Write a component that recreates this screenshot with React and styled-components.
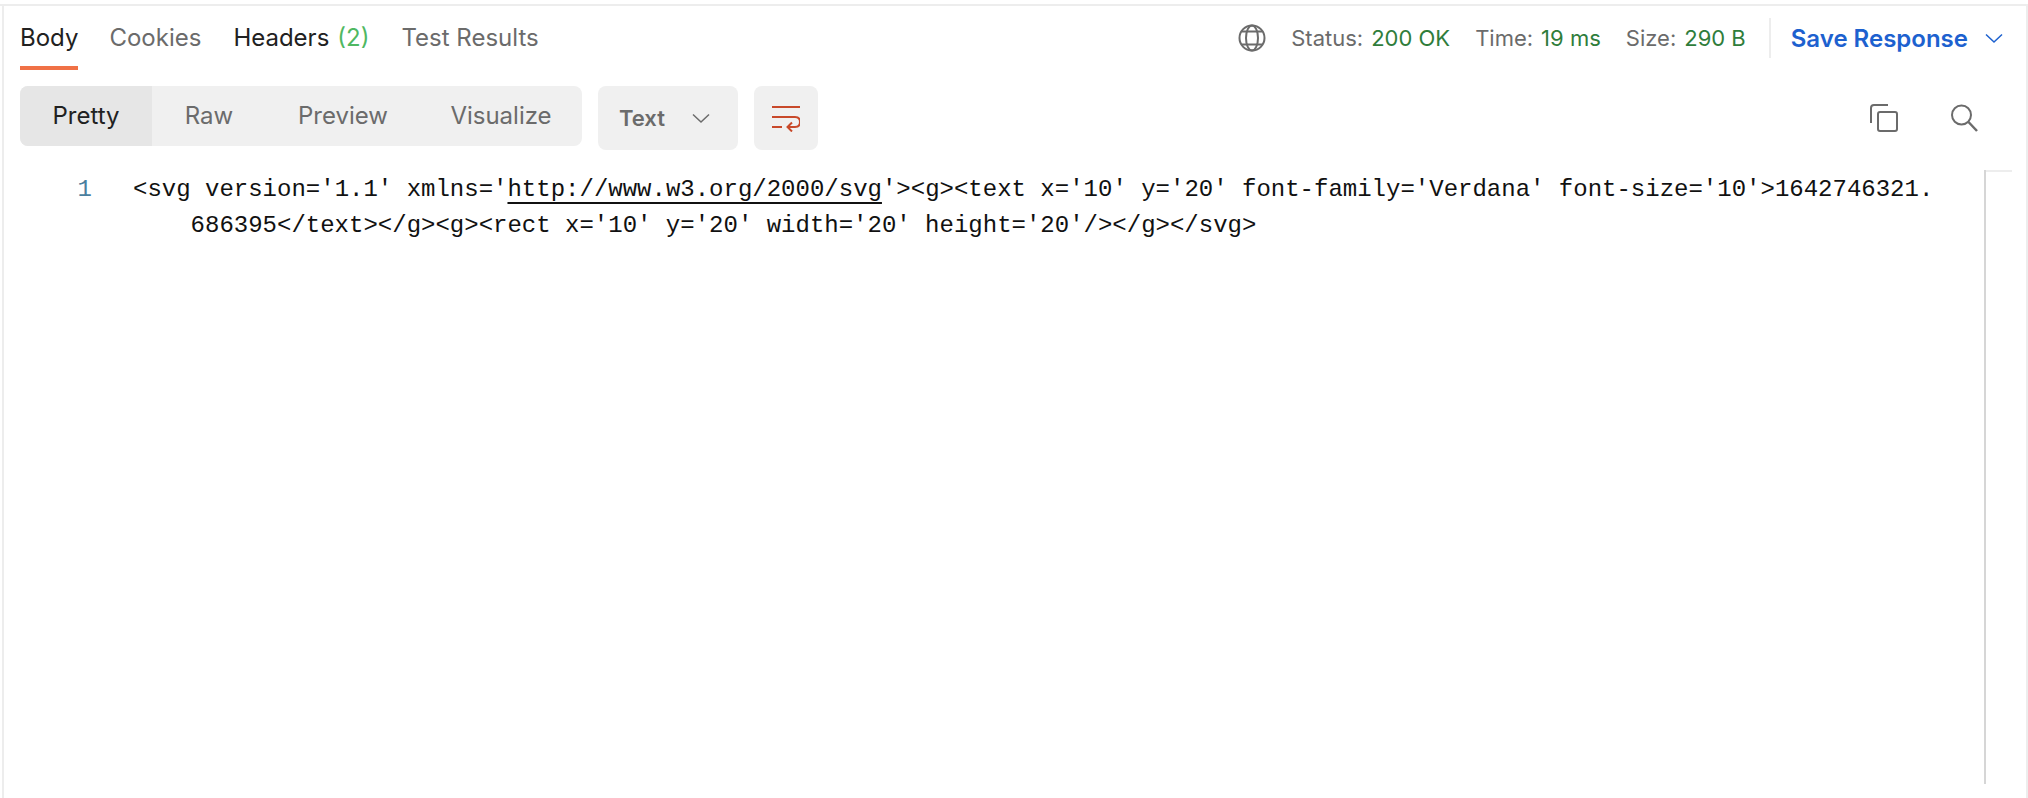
import React from "react";
import styled, { createGlobalStyle } from "styled-components";

const GlobalStyle = createGlobalStyle`
  html, body {
    margin: 0;
    padding: 0;
    background: #fff;
  }
  body {
    font-family: Inter, "Liberation Sans", sans-serif;
  }
`;

const Page = styled.div`
  width: 2028px;
  height: 798px;
  padding-top: 4px;
  box-sizing: border-box;
  overflow: hidden;
`;

const Panel = styled.div`
  height: 794px;
  box-sizing: border-box;
  padding-left: 2px;
  border-top: 2px solid #ededed;
  display: flex;
  flex-direction: column;
`;

const Inner = styled.div`
  flex: 1;
  display: flex;
  flex-direction: column;
  border-left: 2px solid #ededed;
  border-right: 2px solid #ededed;
  min-height: 0;
`;

const TopBar = styled.div`
  height: 64px;
  display: flex;
  justify-content: space-between;
  padding: 0 22px 0 16px;
`;

const Tabs = styled.div`
  display: flex;
  gap: 32px;
`;

const Tab = styled.div`
  height: 64px;
  box-sizing: border-box;
  padding-top: 17px;
  font-size: 24px;
  line-height: 30px;
  color: ${(p) => (p.$strong ? "#212121" : "#6b6b6b")};
  border-bottom: 4px solid ${(p) => (p.$active ? "#f07146" : "transparent")};

  &:first-child {
    margin-right: -1px;
  }
`;

const Count = styled.span`
  color: #4fb862;
  margin-left: 8px;
`;

const Meta = styled.div`
  display: flex;
  align-items: center;
  height: 64px;
`;

const Globe = styled.svg`
  width: 28px;
  height: 28px;
  margin-right: 25px;
`;

const Stat = styled.div`
  font-size: 22px;
  color: #6b6b6b;
  margin-right: 25px;
  white-space: nowrap;
`;

const StatValue = styled.span`
  color: #2f7d3b;
  margin-left: 8px;
`;

const Divider = styled.div`
  width: 2px;
  height: 40px;
  background: #ededed;
  margin: 0 20px 0 -2px;
`;

const SaveButton = styled.div`
  display: flex;
  align-items: center;
  gap: 16px;
  font-size: 24px;
  font-weight: 600;
  color: #1d61cf;
  white-space: nowrap;
`;

const Toolbar = styled.div`
  display: flex;
  align-items: flex-start;
  height: 64px;
  margin-top: 16px;
  padding: 0 47px 0 16px;
`;

const Segments = styled.div`
  display: flex;
  width: 562px;
  height: 60px;
  background: #f0f0f0;
  border-radius: 8px;
  overflow: hidden;
`;

const Segment = styled.div`
  box-sizing: border-box;
  width: ${(p) => p.$width}px;
  padding-bottom: 1px;
  display: flex;
  align-items: center;
  justify-content: center;
  font-size: 24px;
  color: ${(p) => (p.$active ? "#212121" : "#6b6b6b")};
  background: ${(p) => (p.$active ? "#e6e6e6" : "transparent")};
`;

const Select = styled.div`
  width: 140px;
  height: 64px;
  margin-left: 16px;
  box-sizing: border-box;
  padding: 0 27px 0 21px;
  display: flex;
  align-items: center;
  justify-content: space-between;
  background: #f0f0f0;
  border-radius: 8px;
  font-size: 22px;
  font-weight: 600;
  color: #6b6b6b;
`;

const WrapButton = styled.div`
  width: 64px;
  height: 64px;
  margin-left: 16px;
  display: flex;
  align-items: center;
  justify-content: center;
  background: #f0f0f0;
  border-radius: 8px;
`;

const Actions = styled.div`
  margin-left: auto;
  display: flex;
  gap: 53px;
  padding-top: 18px;
`;

const Icon = styled.svg`
  display: block;
  width: ${(p) => p.$size || 28}px;
  height: ${(p) => p.$size || 28}px;
`;

const Editor = styled.div`
  flex: 1;
  display: flex;
  margin-top: 20px;
  margin-bottom: 14px;
  min-height: 0;
`;

const Code = styled.div`
  flex: 1;
  min-width: 0;
  display: flex;
  padding-top: 2px;
`;

const LineNumber = styled.div`
  width: 88px;
  text-align: right;
  box-sizing: border-box;
  font-family: "Liberation Mono", monospace;
  font-size: 24px;
  line-height: 36px;
  color: #4a7f9f;
`;

const CodeText = styled.div`
  margin-left: 41px;
  padding-left: 57.6px;
  text-indent: -57.6px;
  width: 1743px;
  flex-shrink: 0;
  font-family: "Liberation Mono", monospace;
  font-size: 24px;
  line-height: 36px;
  color: #111;
  word-break: break-all;
  white-space: pre-wrap;
`;

const CodeLink = styled.span`
  text-decoration: underline;
  text-decoration-thickness: 2px;
  text-underline-offset: 6px;
`;

const Gutter = styled.div`
  width: 40px;
  flex-shrink: 0;
  border-left: 2px solid #d6d6d6;
  position: relative;

  &::before {
    content: "";
    position: absolute;
    top: 0;
    left: 0;
    width: 26px;
    height: 2px;
    background: #ededed;
  }
`;

const Chevron = ({ color, size }) => (
  <Icon $size={size} viewBox="0 0 20 20" fill="none" stroke={color} strokeWidth="1.5">
    <path d="M2 6.5 L10 14 L18 6.5" />
  </Icon>
);

export default function App() {
  return (
    <Page>
      <GlobalStyle />
      <Panel>
        <Inner>
          <TopBar>
            <Tabs>
              <Tab $active $strong>Body</Tab>
              <Tab>Cookies</Tab>
              <Tab $strong>
                Headers<Count>(2)</Count>
              </Tab>
              <Tab>Test Results</Tab>
            </Tabs>
            <Meta>
              <Globe viewBox="0 0 28 28" fill="none" stroke="#6b6b6b" strokeWidth="2">
                <circle cx="14" cy="14" r="12.5" />
                <ellipse cx="14" cy="14" rx="6" ry="12.5" />
                <path d="M4 7.5 H24 M4 20.5 H24" />
              </Globe>
              <Stat>
                Status:<StatValue>200 OK</StatValue>
              </Stat>
              <Stat>
                Time:<StatValue>19 ms</StatValue>
              </Stat>
              <Stat>
                Size:<StatValue>290 B</StatValue>
              </Stat>
              <Divider />
              <SaveButton>
                Save Response
                <Chevron color="#1d61cf" size={20} />
              </SaveButton>
            </Meta>
          </TopBar>
          <Toolbar>
            <Segments>
              <Segment $active $width={132}>Pretty</Segment>
              <Segment $width={114}>Raw</Segment>
              <Segment $width={154}>Preview</Segment>
              <Segment $width={162}>Visualize</Segment>
            </Segments>
            <Select>
              Text
              <Chevron color="#6b6b6b" size={20} />
            </Select>
            <WrapButton>
              <Icon viewBox="0 0 28 28" fill="none" stroke="#c8492a" strokeWidth="2">
                <path d="M0 3 H28 M0 23 H10" />
                <path d="M0 13 H23 C26 13 28 15 28 18 C28 21 26 23 23 23 H16" />
                <path d="M20 18.5 L15.5 23 L20 27.5" />
              </Icon>
            </WrapButton>
            <Actions>
              <Icon viewBox="0 0 28 28" fill="none" stroke="#6b6b6b" strokeWidth="2">
                <rect x="8" y="8" width="19" height="19" rx="2" />
                <path d="M18 1 H4 C2 1 1 2 1 4 V19" />
              </Icon>
              <Icon viewBox="0 0 28 28" fill="none" stroke="#6b6b6b" strokeWidth="2">
                <circle cx="10.5" cy="11" r="9.5" />
                <path d="M17.5 18 L26 27" strokeWidth="2.5" />
              </Icon>
            </Actions>
          </Toolbar>
          <Editor>
            <Code>
              <LineNumber>1</LineNumber>
              <CodeText>
                {"<svg version='1.1' xmlns='"}
                <CodeLink>http://www.w3.org/2000/svg</CodeLink>
                {"'><g><text x='10' y='20' font-family='Verdana' font-size='10'>1642746321.686395</text></g><g><rect x='10' y='20' width='20' height='20'/></g></svg>"}
              </CodeText>
            </Code>
            <Gutter />
          </Editor>
        </Inner>
      </Panel>
    </Page>
  );
}
